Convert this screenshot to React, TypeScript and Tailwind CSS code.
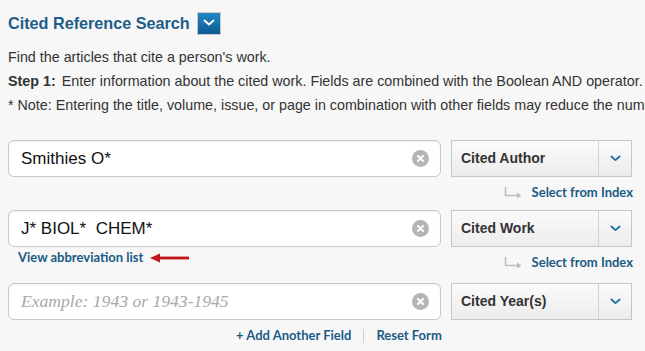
import React from 'react';

const linkFont = { fontFamily: 'Lato, "Open Sans", sans-serif' };

function ClearIcon() {
  return (
    <svg width="17" height="17" viewBox="0 0 17 17" className="shrink-0">
      <circle cx="8.5" cy="8.5" r="8.5" fill="#b5b5b5" />
      <path d="M6 6 L11 11 M11 6 L6 11" stroke="#fff" strokeWidth="2" strokeLinecap="round" />
    </svg>
  );
}

function Chevron({ color = '#1d6fa5', width = 12 }: { color?: string; width?: number }) {
  return (
    <svg width={width} height={width * 0.6} viewBox="0 0 12 7">
      <path d="M1.5 1.5 L6 5.5 L10.5 1.5" fill="none" stroke={color} strokeWidth="2" strokeLinecap="round" strokeLinejoin="round" />
    </svg>
  );
}

function IndexArrow() {
  return (
    <svg width="19" height="12" viewBox="0 0 19 12" className="mr-[9px]">
      <path d="M1.5 0 V8.5 H13" fill="none" stroke="#bdbdbd" strokeWidth="1.5" />
      <path d="M13 5.5 L17.5 8.5 L13 11.5 Z" fill="#bdbdbd" />
    </svg>
  );
}

function TextField({ value, placeholder }: { value?: string; placeholder?: string }) {
  return (
    <div className="h-[37px] w-full flex items-center justify-between rounded-[6px] border border-[#c8c8c8] bg-white pl-[12px] pr-[11px] shadow-[inset_0_1px_2px_rgba(0,0,0,0.06)]">
      {value ? (
        <span className="text-[17px] text-[#111] whitespace-pre" style={{ fontFamily: '"Liberation Sans", Arial, sans-serif' }}>
          {value}
        </span>
      ) : (
        <span className="text-[17.6px] italic text-[#a8a8a8]" style={{ fontFamily: '"Liberation Serif", Georgia, serif' }}>
          {placeholder}
        </span>
      )}
      <ClearIcon />
    </div>
  );
}

function FieldSelect({ label }: { label: string }) {
  return (
    <div className="h-[37px] w-full flex border border-[#c6c6c6] bg-gradient-to-b from-[#fbfbfb] to-[#ececec]">
      <div className="flex-1 flex items-center pl-[9px] text-[14px] font-bold text-[#333]">{label}</div>
      <div className="w-[33px] flex items-center justify-center border-l border-[#d2d2d2]">
        <Chevron width={11} />
      </div>
    </div>
  );
}

function IndexLink() {
  return (
    <div className="mt-[8px] h-[16px] flex items-center justify-end -mr-[1px]">
      <IndexArrow />
      <span className="text-[13px] font-bold text-[#1b5b86]" style={linkFont}>
        Select from Index
      </span>
    </div>
  );
}

export default function App() {
  return (
    <div
      className="w-[645px] h-[351px] overflow-hidden bg-[#f7f7f7] text-[#333] whitespace-nowrap"
      style={{ fontFamily: '"Liberation Sans", Arial, sans-serif' }}
    >
      <div className="pl-[8px] pt-[11px]">
        <div className="h-[24px] flex items-center gap-[7px]">
          <h1 className="text-[16.2px] font-bold text-[#1d5d89] leading-none">Cited Reference Search</h1>
          <div className="w-[24px] h-[23px] flex items-center justify-center border border-[#c9c9c9] bg-gradient-to-b from-[#2188c4] to-[#0c5b90]">
            <Chevron color="#ffffff" width={12} />
          </div>
        </div>
        <div className="mt-[11px] text-[14.3px]">
          <div className="h-6 flex items-center">Find the articles that cite a person's work.</div>
          <div className="h-6 flex items-center">
            <span className="font-bold mr-[6px]">Step 1:</span>
            Enter information about the cited work. Fields are combined with the Boolean AND operator.
          </div>
          <div className="h-6 flex items-center">
            * Note: Entering the title, volume, issue, or page in combination with other fields may reduce the number of records retrieved.
          </div>
        </div>
      </div>

      <div className="mt-[22px] w-[632px] pl-[8px]">
        {/* row 1 */}
        <div className="flex gap-[10px]">
          <div className="flex-1">
            <TextField value="Smithies O*" />
          </div>
          <div className="w-[181px]">
            <FieldSelect label="Cited Author" />
            <IndexLink />
          </div>
        </div>

        {/* row 2 */}
        <div className="mt-[9px] flex gap-[10px]">
          <div className="flex-1">
            <TextField value="J* BIOL*  CHEM*" />
            <div className="mt-[3px] h-[16px] flex items-center pl-[10px]">
              <span className="text-[13px] font-bold text-[#1b5b86]" style={linkFont}>
                View abbreviation list
              </span>
              <svg width="39" height="10" viewBox="0 0 39 10" className="ml-[7px]">
                <path d="M0 5 L10 0.5 L10 9.5 Z" fill="#c0151b" />
                <rect x="9" y="3.6" width="30" height="2.8" fill="#c0151b" />
              </svg>
            </div>
          </div>
          <div className="w-[181px]">
            <FieldSelect label="Cited Work" />
            <IndexLink />
          </div>
        </div>

        {/* row 3 */}
        <div className="mt-[12px] flex gap-[10px]">
          <div className="flex-1">
            <TextField placeholder="Example: 1943 or 1943-1945" />
          </div>
          <div className="w-[181px]">
            <FieldSelect label="Cited Year(s)" />
          </div>
        </div>

        <div className="mt-[8px] h-[16px] flex items-center gap-[12px] pl-[228px]">
          <span className="text-[13px] font-bold text-[#1b5b86]" style={linkFont}>
            + Add Another Field
          </span>
          <span className="w-px h-[14px] bg-[#cfcfcf]" />
          <span className="text-[13px] font-bold text-[#1b5b86]" style={linkFont}>
            Reset Form
          </span>
        </div>
      </div>
    </div>
  );
}
